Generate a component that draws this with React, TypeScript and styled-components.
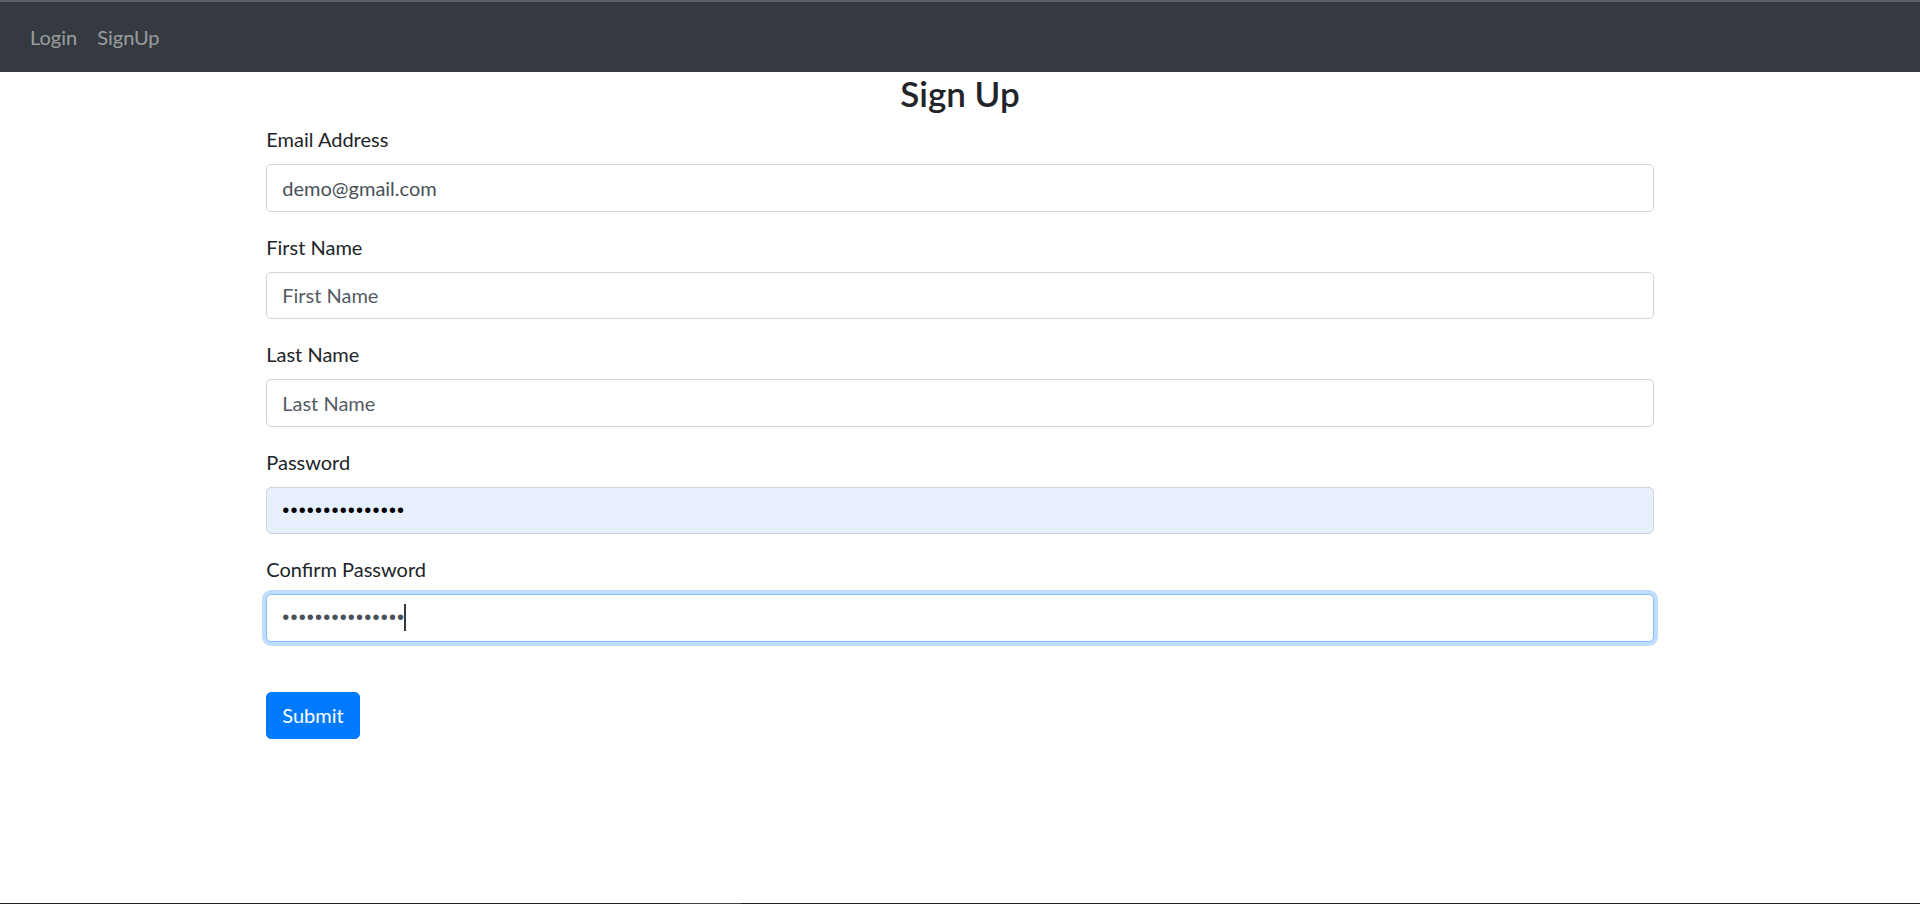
import React from "react";
import styled, { createGlobalStyle } from "styled-components";

const GlobalStyle = createGlobalStyle`
  *, *::before, *::after {
    box-sizing: border-box;
  }

  body {
    margin: 0;
    font-family: Lato, "Open Sans", sans-serif;
    color: #212529;
    background: #fff;
  }
`;

const Page = styled.div`
  display: flex;
  flex-direction: column;
  min-height: 100vh;
`;

const Navbar = styled.nav`
  display: flex;
  align-items: center;
  height: 72px;
  padding: 0 20px;
  background: #343a40;
  border-top: 2px solid #5b5e63;
`;

const NavLink = styled.a`
  padding: 10px;
  font-size: 20px;
  line-height: 1.5;
  color: rgba(255, 255, 255, 0.5);
  text-decoration: none;
  cursor: pointer;
`;

const Main = styled.main`
  flex: 1;
`;

const Container = styled.div`
  max-width: 1425px;
  margin: 0 auto;
  padding: 0 18.75px;
`;

const Title = styled.h3`
  margin: 0 0 10px;
  font-size: 35px;
  font-weight: 600;
  line-height: 1.2;
  text-align: center;
`;

const FormGroup = styled.div`
  margin-bottom: 20px;
`;

const Label = styled.label`
  display: inline-block;
  margin-bottom: 10px;
  font-size: 20px;
  line-height: 30px;
`;

const InputWrap = styled.div`
  position: relative;
`;

const Input = styled.input<{ $autofill?: boolean; $focused?: boolean }>`
  display: block;
  width: 100%;
  height: 47.5px;
  padding: 7.5px 15px;
  font-family: inherit;
  font-size: 20px;
  line-height: 1.5;
  color: ${(p) => (p.$autofill ? "#000" : "#495057")};
  background: ${(p) => (p.$autofill ? "#e8f0fe" : "#fff")};
  border: 1.25px solid ${(p) => (p.$focused ? "#80bdff" : "#ced4da")};
  border-radius: 5px;
  box-shadow: ${(p) =>
    p.$focused ? "0 0 0 4px rgba(0, 123, 255, 0.25)" : "none"};
  outline: none;
  caret-color: transparent;

  &[type="password"] {
    font-family: "Liberation Sans", Arial, sans-serif;
    letter-spacing: 1.2px;
  }

  &::placeholder {
    color: #535b63;
    opacity: 1;
  }
`;

const Caret = styled.span`
  position: absolute;
  top: 10px;
  left: 138px;
  width: 2px;
  height: 27px;
  background: #343a40;
`;

const Spacer = styled.div`
  height: 30px;
`;

const SubmitButton = styled.button`
  display: inline-block;
  padding: 7.5px 15px;
  font-family: inherit;
  font-size: 20px;
  line-height: 1.5;
  color: #fff;
  background: #007bff;
  border: 1.25px solid #007bff;
  border-radius: 5px;
  cursor: pointer;
`;

const BottomEdge = styled.div`
  height: 1px;
  background: linear-gradient(
    to right,
    #222 0,
    #222 680px,
    #444 680px,
    #444 741px,
    #222 741px
  );
`;

interface IFieldProps {
  label: string;
  type?: string;
  value?: string;
  placeholder?: string;
  autofill?: boolean;
  focused?: boolean;
}

const Field: React.FC<IFieldProps> = ({
  label,
  type = "text",
  value,
  placeholder,
  autofill,
  focused,
}) => (
  <FormGroup>
    <Label>{label}</Label>
    <InputWrap>
      <Input
        type={type}
        defaultValue={value}
        placeholder={placeholder}
        readOnly
        $autofill={autofill}
        $focused={focused}
      />
      {focused && <Caret />}
    </InputWrap>
  </FormGroup>
);

const App: React.FC = () => {
  return (
    <Page>
      <GlobalStyle />
      <Navbar>
        <NavLink>Login</NavLink>
        <NavLink>SignUp</NavLink>
      </Navbar>
      <Main>
        <Container>
          <Title>Sign Up</Title>
          <form onSubmit={(e) => e.preventDefault()}>
            <Field label="Email Address" type="email" value="demo@gmail.com" />
            <Field label="First Name" placeholder="First Name" />
            <Field label="Last Name" placeholder="Last Name" />
            <Field
              label="Password"
              type="password"
              value="demopassword123"
              autofill
            />
            <Field
              label="Confirm Password"
              type="password"
              value="demopassword123"
              focused
            />
            <Spacer />
            <SubmitButton type="submit">Submit</SubmitButton>
          </form>
        </Container>
      </Main>
      <BottomEdge />
    </Page>
  );
};

export default App;
